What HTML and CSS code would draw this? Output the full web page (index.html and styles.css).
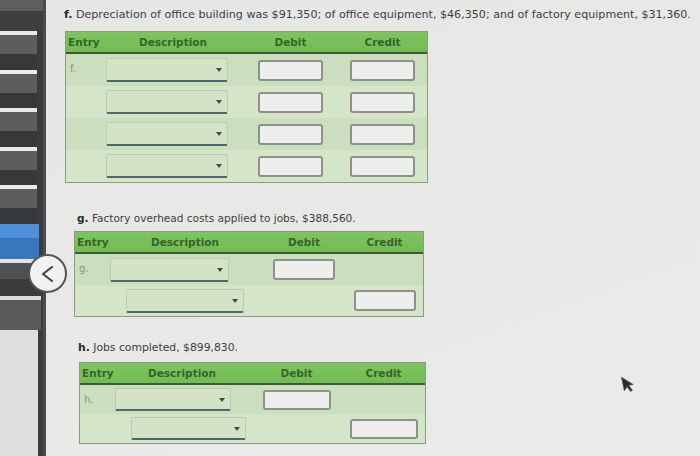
FILE: index.html
```html
<!DOCTYPE html>
<html>
<head>
<meta charset="utf-8">
<link rel="stylesheet" href="styles.css">
</head>
<body>
<aside class="sidebar">
  <div class="nav-top"></div>
  <div class="nav-item"><div class="nav-hi"></div></div>
  <div class="nav-item"><div class="nav-hi"></div></div>
  <div class="nav-item"><div class="nav-hi"></div></div>
  <div class="nav-item"><div class="nav-hi"></div></div>
  <div class="nav-item"><div class="nav-hi"></div></div>
  <div class="nav-blue"></div>
  <div class="nav-item nav-item-b"><div class="nav-hi"></div></div>
  <div class="nav-last"></div>
  <div class="nav-panel"></div>
</aside>

<button class="back" aria-label="Back">
  <svg width="20" height="20" viewBox="0 0 20 20"><path d="M14 3 L5 10 L14 17" fill="none" stroke="#444" stroke-width="2.2" stroke-linecap="round" stroke-linejoin="round"/></svg>
</button>

<main class="main">
  <section class="sec sec-f">
    <p class="q"><b>f.</b> Depreciation of office building was $91,350; of office equipment, $46,350; and of factory equipment, $31,360.</p>
    <div class="tbl">
      <div class="row head">
        <span class="h-entry">Entry</span><span>Description</span><span>Debit</span><span>Credit</span>
      </div>
      <div class="row body r1">
        <span class="entry">f.</span>
        <span class="cell-d"><span class="sel"></span></span>
        <span class="cell"><span class="inp"></span></span>
        <span class="cell"><span class="inp"></span></span>
      </div>
      <div class="row body r2">
        <span class="entry"></span>
        <span class="cell-d"><span class="sel"></span></span>
        <span class="cell"><span class="inp"></span></span>
        <span class="cell"><span class="inp"></span></span>
      </div>
      <div class="row body r1">
        <span class="entry"></span>
        <span class="cell-d"><span class="sel"></span></span>
        <span class="cell"><span class="inp"></span></span>
        <span class="cell"><span class="inp"></span></span>
      </div>
      <div class="row body r2">
        <span class="entry"></span>
        <span class="cell-d"><span class="sel"></span></span>
        <span class="cell"><span class="inp"></span></span>
        <span class="cell"><span class="inp"></span></span>
      </div>
    </div>
  </section>

  <section class="sec sec-g">
    <p class="q"><b>g.</b> Factory overhead costs applied to jobs, $388,560.</p>
    <div class="tbl">
      <div class="row head">
        <span class="h-entry">Entry</span><span>Description</span><span>Debit</span><span>Credit</span>
      </div>
      <div class="row body r1">
        <span class="entry">g.</span>
        <span class="cell-d"><span class="sel"></span></span>
        <span class="cell"><span class="inp"></span></span>
        <span class="cell"></span>
      </div>
      <div class="row body r2">
        <span class="entry"></span>
        <span class="cell-d"><span class="sel sel-in"></span></span>
        <span class="cell"></span>
        <span class="cell"><span class="inp"></span></span>
      </div>
    </div>
  </section>

  <section class="sec sec-h">
    <p class="q"><b>h.</b> Jobs completed, $899,830.</p>
    <div class="tbl">
      <div class="row head">
        <span class="h-entry">Entry</span><span>Description</span><span>Debit</span><span>Credit</span>
      </div>
      <div class="row body r1">
        <span class="entry">h.</span>
        <span class="cell-d"><span class="sel"></span></span>
        <span class="cell"><span class="inp"></span></span>
        <span class="cell"></span>
      </div>
      <div class="row body r2">
        <span class="entry"></span>
        <span class="cell-d"><span class="sel sel-in"></span></span>
        <span class="cell"></span>
        <span class="cell"><span class="inp"></span></span>
      </div>
    </div>
  </section>
</main>

<svg class="cursor" width="14" height="18" viewBox="0 0 14 18"><path d="M2 1 L2 15 L5.5 11.5 L8 17 L10 16 L7.5 10.5 L12 10.5 Z" fill="#2a2a30" stroke="#555" stroke-width="0.6"/></svg>
</body>
</html>
```

FILE: styles.css
```css
* { box-sizing: border-box; }
html, body { margin: 0; padding: 0; }
body {
  width: 700px;
  height: 456px;
  overflow: hidden;
  display: flex;
  position: relative;
  font-family: "DejaVu Sans", Verdana, sans-serif;
  background: linear-gradient(160deg, #e6e6e4 0%, #e8e8e6 50%, #ebebea 100%);
  color: #333;
}

/* sidebar */
.sidebar {
  width: 46px;
  flex: none;
  display: flex;
  flex-direction: column;
  background: #3a3b3d;
  border-right: 3px solid #4a4b4d;
}
.nav-top {
  height: 31px;
  background: linear-gradient(#5d5e60 0 11px, #3d3e40 11px);
}
.nav-item {
  height: 39px;
  border-top: 4px solid #e9e9e9;
  background: #37383a;
  margin-right: 6px;
}
.nav-item:nth-child(odd) { height: 38px; }
.nav-hi {
  height: 19px;
  background: #5c5d5f;
}
.nav-blue {
  height: 35px;
  background: linear-gradient(#4d92d8 0 14px, #3877bd 14px);
  margin-right: 4px;
}
.nav-item-b {
  height: 37px;
  border-top-color: #e2e2e2;
  background: #3b3c3e;
  margin-right: 4px;
}
.nav-item-b .nav-hi { height: 16px; background: #4f5052; }
.nav-last {
  height: 34px;
  border-top: 4px solid #dcdcdc;
  background: #58595b;
  margin-right: 2px;
}
.nav-panel {
  flex: 1;
  background: #dedede;
  border-right: 5px solid #3c3d3f;
}

.back {
  position: absolute;
  left: 28px;
  top: 254px;
  width: 39px;
  height: 39px;
  border-radius: 50%;
  border: 2px solid #545556;
  background: #f1f1f0;
  padding: 0;
  display: flex;
  align-items: center;
  justify-content: center;
}

.cursor {
  position: absolute;
  left: 621px;
  top: 375px;
  transform: rotate(-12deg);
}

/* main */
.main {
  flex: 1;
  padding: 7px 0 0 16px;
}
.q {
  margin: 0 0 8px;
  font-size: 10.6px;
  line-height: 16px;
  color: #3e3e3e;
  white-space: nowrap;
}
.q b { color: #2a2a2a; }

.tbl {
  border: 1px solid #8c9a84;
  background: #cddfbf;
}
.row {
  display: grid;
  align-items: center;
}
.head {
  height: 22px;
  background: linear-gradient(#7fc55f, #72bb52);
  border-bottom: 2px solid #3f5a37;
  font-weight: bold;
  font-size: 10.5px;
  color: #36642c;
  text-align: center;
}
.head .h-entry { text-align: left; padding-left: 2px; }
.body { height: 32px; }
.r1 { background: #cbdebd; }
.r2 { background: #d4e5c8; }
.entry {
  align-self: start;
  padding: 9px 0 0 4px;
  font-size: 10px;
  color: #8a9882;
}
.cell-d { display: flex; }
.cell { display: flex; justify-content: center; }

.sel {
  position: relative;
  display: block;
  height: 24px;
  background: #d2e3c6;
  border: 1px solid #bccbb2;
  border-bottom: 2px solid #4e6671;
  border-radius: 2px;
}
.sel::after {
  content: "";
  position: absolute;
  right: 5px;
  top: 9px;
  border-left: 3px solid transparent;
  border-right: 3px solid transparent;
  border-top: 4px solid #3c4a44;
}
.inp {
  display: block;
  height: 21px;
  background: #eeeeed;
  border: 2px solid #8e918b;
  border-radius: 3px;
}

/* section f */
.sec-f { margin-left: 3px; }
.sec-f .q { margin-left: -1px; font-size: 11.1px; }
.sec-f .tbl { width: 363px; }
.sec-f .row { grid-template-columns: 37px 140px 95px 1fr; }
.sec-f .head { height: 22px; }
.sec-f .body { height: 32px; }
.sec-f .sel { margin-left: 3px; width: 122px; }
.sec-f .inp { width: 65px; }

/* section g */
.sec-g { margin-left: 12px; margin-top: 27px; }
.sec-g .q { margin-left: 3px; margin-bottom: 5px; font-size: 10.55px; }
.sec-g .tbl { width: 350px; }
.sec-g .row { grid-template-columns: 33px 154px 84px 1fr; }
.sec-g .head { height: 22px; }
.sec-g .body { height: 31px; }
.sec-g .sel { margin-left: 2px; width: 119px; }
.sec-g .sel-in { margin-left: 18px; width: 118px; }
.sec-g .inp { width: 62px; height: 21px; }

/* section h */
.sec-h { margin-left: 17px; margin-top: 23px; }
.sec-h .q { margin-left: -1px; margin-bottom: 6px; font-size: 10.8px; }
.sec-h .tbl { width: 347px; }
.sec-h .row { grid-template-columns: 33px 138px 91px 1fr; }
.sec-h .head { height: 22px; }
.sec-h .body { height: 29px; }
.sec-h .sel { margin-left: 2px; width: 116px; height: 23px; }
.sec-h .sel-in { margin-left: 18px; width: 115px; }
.sec-h .inp { width: 68px; height: 20px; }
```
